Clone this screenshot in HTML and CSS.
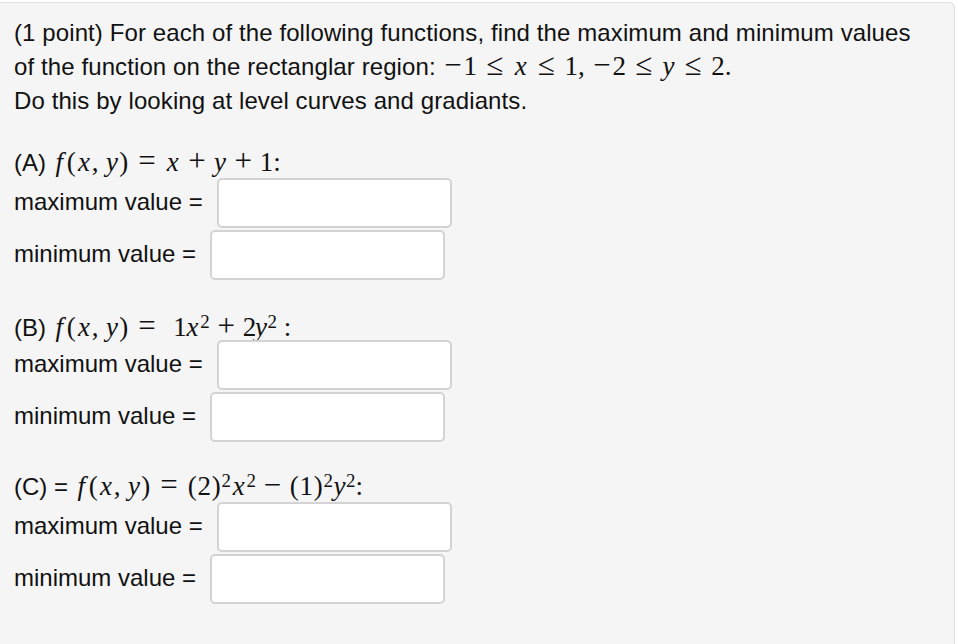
FILE: index.html
```html
<!DOCTYPE html>
<html lang="en">
<head>
<meta charset="utf-8">
<title>Level curves problem</title>
<link rel="stylesheet" href="styles.css">
</head>
<body>
<div class="panel">
  <p class="intro">(1 point) For each of the following functions, find the maximum and minimum values<br>of the function on the rectanglar region: <span class="m"><span class="neg">−</span>1<span class="rel">≤</span><i class="v vx">x</i><span class="rel">≤</span>1<span class="cm">,</span><span class="neg">−</span>2<span class="rel">≤</span><i class="v vy">y</i><span class="rel">≤</span>2<span class="pd">.</span></span><br>Do this by looking at level curves and gradiants.</p>

  <section class="part">
    <div class="title">(A) <span class="m"><i class="v vf">f</i><span class="p">(</span><i class="v vx">x</i><span class="cm">,</span><i class="v vy">y</i><span class="p">)</span><span class="rel">=</span><i class="v vx">x</i><span class="bin">+</span><i class="v vy">y</i><span class="bin">+</span>1<span class="pd">:</span></span></div>
    <div class="row"><label>maximum value =</label><input class="box" type="text"></div>
    <div class="row"><label>minimum value =</label><input class="box" type="text"></div>
  </section>

  <section class="part">
    <div class="title title-low">(B) <span class="m"><i class="v vf">f</i><span class="p">(</span><i class="v vx">x</i><span class="cm">,</span><i class="v vy">y</i><span class="p">)</span><span class="rel">=</span><span class="gap"></span>1<i class="v vx tight">x</i><sup>2</sup><span class="bin">+</span>2<i class="v vy tight">y</i><sup>2</sup><span class="sp"></span><span class="pd">:</span></span></div>
    <div class="row"><label>maximum value =</label><input class="box" type="text"></div>
    <div class="row"><label>minimum value =</label><input class="box" type="text"></div>
  </section>

  <section class="part">
    <div class="title">(C) = <span class="m"><i class="v vf">f</i><span class="p">(</span><i class="v vx">x</i><span class="cm">,</span><i class="v vy">y</i><span class="p">)</span><span class="rel">=</span><span class="p">(</span>2<span class="p">)</span><sup>2</sup><i class="v vx">x</i><sup>2</sup><span class="bin">−</span><span class="p">(</span>1<span class="p">)</span><sup>2</sup><i class="v vy">y</i><sup>2</sup><span class="pd">:</span></span></div>
    <div class="row"><label>maximum value =</label><input class="box" type="text"></div>
    <div class="row"><label>minimum value =</label><input class="box" type="text"></div>
  </section>
</div>
</body>
</html>
```

FILE: styles.css
```css
* { box-sizing: border-box; }

html, body {
  margin: 0;
  padding: 0;
  overflow: hidden;
  background: #ffffff;
}

body {
  font-family: "Liberation Sans", Arial, Helvetica, sans-serif;
  font-size: 24px;
  color: #111111;
}

.panel {
  margin: 2px 3px 0 -2px;
  height: calc(100vh - 2px);
  background: #f5f5f5;
  border: 1px solid #dedede;
  border-bottom: none;
  border-radius: 0 6px 0 0;
  padding: 13px 0 0 15px;
}

.intro {
  margin: 0;
  line-height: 34px;
  white-space: nowrap;
  letter-spacing: .1px;
}

.part { margin-top: 30px; }

.title {
  height: 30px;
  line-height: 30px;
  white-space: nowrap;
}

.title-low { padding-top: 3px; }

.row {
  display: flex;
  align-items: center;
  gap: 14px;
  height: 50px;
}

.row + .row { margin-top: 2px; }

.row label { margin-top: -3px; }

.box {
  width: 235px;
  height: 50px;
  margin: 0;
  padding: 0 8px;
  background: #ffffff;
  border: 2px solid #d3d3d3;
  border-radius: 5px;
  font: inherit;
  outline: none;
}

.m {
  font-family: "Liberation Serif", "DejaVu Serif", serif;
  font-size: 27px;
  line-height: 20px;
  letter-spacing: 0;
}

.v {
  font-style: italic;
  display: inline-block;
  text-align: center;
}

.vx { width: .572em; }
.vy { width: .49em; }
.vf { width: .49em; }

.tight { margin-left: -.07em; }

.p {
  display: inline-block;
  width: .389em;
  text-align: center;
}

.rel, .bin, .neg {
  display: inline-block;
  width: 21px;
  font-size: 31px;
  line-height: 20px;
  text-align: center;
}

.rel { margin: 0 7.5px; }
.bin { margin: 0 6px; }

.cm { margin-right: .25em; }

.pd {
  display: inline-block;
  width: .278em;
}

.gap { display: inline-block; width: .3em; }
.sp { display: inline-block; width: .25em; }

sup {
  font-size: .7em;
  line-height: 0;
  vertical-align: .45em;
}
```
